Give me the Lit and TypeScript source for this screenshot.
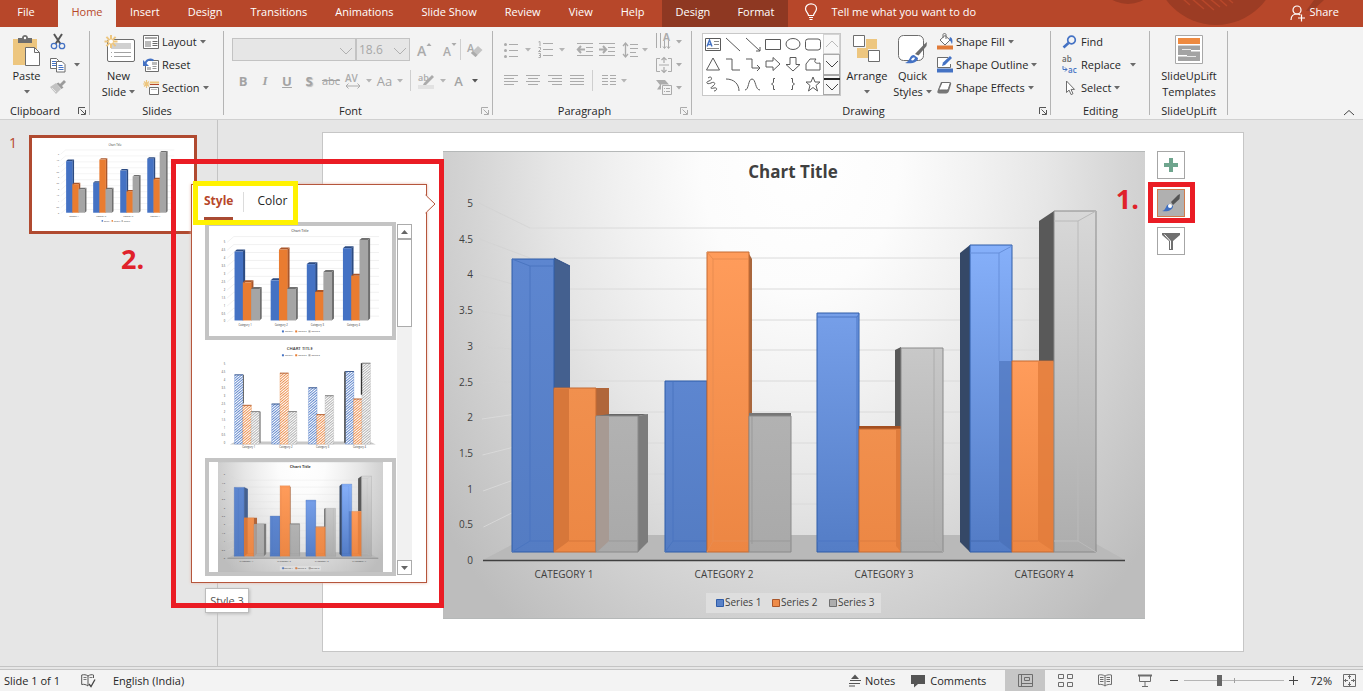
import { LitElement, html, css, svg, nothing } from "lit";
import { customElement, property, state } from "lit/decorators.js";

const base = css`
  :host { box-sizing: border-box; font-family: "Open Sans", "Noto Sans", sans-serif; font-size: 11px; line-height: 16px; color: #262626; }
  *, *::before, *::after { box-sizing: border-box; }
  button { font: inherit; color: inherit; background: none; border: 0; padding: 0; margin: 0; }
  svg { display: block; flex: none; overflow: visible; }
`;

/* ---------- small helpers ---------- */
const caret = html`<svg class="caret" width="6" height="4" viewBox="0 0 6 4"><path d="M0 0h6L3 3.6z" fill="currentColor"/></svg>`;
const icon = (w: number, h: number, body: unknown) =>
  html`<svg width=${w} height=${h} viewBox="0 0 ${w} ${h}" fill="none" stroke-width="1">${body}</svg>`;

const G = "#6d6d6d";
const D = "#ababab";
const B = "#4472c4";
const S = "#edc67f";

const ic = {
  paste: icon(30, 32, svg`<path d="M1 4h24v26H1z" fill="${S}"/><path d="M6 3h4c0-4 6-4 6 0h4v5H6z" fill="${G}"/><circle cx="13" cy="3" r="1.2" fill="#fff"/><path d="M13.500 12.500h9l5 5v13h-14z" fill="#fff" stroke="${G}"/><path d="M22.500 12.500v5h5" stroke="${G}"/>`),
  cut: icon(16, 16, svg`<path d="M4 0l6.500 10M12 0L5.500 10" stroke="#555" stroke-width="2"/><circle cx="4" cy="12" r="2.700" stroke="${B}" stroke-width="1.300"/><circle cx="12" cy="12" r="2.700" stroke="${B}" stroke-width="1.300"/>`),
  copy: icon(16, 16, svg`<path d="M.5 1.500h6l2 2v8h-8z" fill="#fff" stroke="${G}"/><path d="M2 4.500h4M2 6.500h4M2 8.500h4" stroke="${B}"/><path d="M6.500 4.500h5.500l3 3v7.500H6.500z" fill="#fff" stroke="${G}"/><path d="M8.500 8.500h4M8.500 10.500h5M8.500 12.500h5" stroke="${B}"/>`),
  painter: icon(17, 15, svg`<path d="M0 7l6-4 5 6-5 5z" fill="#c2c2c2"/><path d="M6.500 3.500l5 5.500 2-1.500-1.500-1.500 4-4-2-2-4 4L8.500 2.500z" fill="#9b9b9b"/><path d="M2 8l4 4" stroke="#e5e5e5"/>`),
  newSlide: icon(32, 30, svg`<rect x="4.500" y="4.500" width="27" height="22" rx="1.500" fill="#fff" stroke="${G}"/><path d="M8 8h20v6H8z" fill="#d0d0d0"/><path d="M8 17.500h1M11 17.500h17M8 21.500h1M11 21.500h17" stroke="#a2a2a2"/><path d="M8 0v13M1.500 6.500h13M3.400 1.900l9.200 9.200M12.600 1.900l-9.200 9.200" stroke="${S}" stroke-width="2"/><circle cx="8" cy="6.500" r="2" fill="#fff"/>`),
  layout: icon(16, 14, svg`<path d="M.5.5h15v13H.5z" fill="#fff" stroke="${G}"/><path d="M2 2h12v2H2z" fill="#a9a9a9"/><path d="M2 6h6v6H2z" fill="#bbb"/><path d="M9.500 6.500h5M9.500 8.500h5M9.500 10.500h5" stroke="${G}"/>`),
  reset: icon(16, 14, svg`<path d="M4.500 2.500h11v11h-13v-6" fill="#fff" stroke="${G}"/><path d="M9 4h5v3H9zM4 9h4v3H4z" fill="#bbb"/><path d="M9.500 8.500h4M9.500 10.500h4" stroke="#999"/><path d="M2 6.500C3 1.500 7 .5 10.500 2.500" stroke="${B}" stroke-width="2"/><path d="M0 2v6h6z" fill="${B}"/>`),
  section: icon(16, 15, svg`<path d="M7 2.500h9" stroke="${S}" stroke-width="2"/><path d="M7 4.500h9" stroke="#b7472a"/><path d="M6.500 7.500h9v7h-9z" fill="#fff" stroke="${G}"/><path d="M8 9.500h6" stroke="#bbb"/><path d="M3.500 0v8M0 4h7M1 1.500l5 5M6 1.500l-5 5" stroke="${S}" stroke-width="1.200"/>`),
  launcher: icon(8, 8, svg`<path d="M.5 7V.5H7M7.500 3v4.500H3M2.500 2.500l4.500 4.500" stroke="currentColor"/>`),
  grow: icon(15, 16, svg`<text x="0" y="14" font-size="14" font-weight="600" fill="${D}">A</text><path d="M9.500 4l2.500-3 2.500 3z" fill="${D}"/>`),
  shrink: icon(15, 16, svg`<text x="1" y="14" font-size="12" font-weight="600" fill="${D}">A</text><path d="M9.500 1l2.500 3 2.500-3z" fill="${D}"/>`),
  eraser: icon(16, 16, svg`<text x="0" y="10" font-size="11" font-weight="600" fill="${D}">A</text><path d="M4 11l7-7 4.500 4-7 7z" fill="#c4c4c4"/><path d="M4 11l2-2 4.500 4-2 2z" fill="${D}"/>`),
  spacing: icon(16, 16, svg`<text x="0" y="9" font-size="10" font-weight="600" fill="${D}">AV</text><path d="M1 13h14M3.500 10.500L1 13l2.500 2.500M12.500 10.500L15 13l-2.500 2.500" stroke="${D}"/>`),
  highlight: icon(17, 16, svg`<text x="0" y="8" font-size="9" font-weight="600" fill="${D}">ab</text><path d="M6 10L14 2l2 2-8 8-3 0z" fill="${D}"/><path d="M0 12h16v4H0z" fill="#e2e2e2"/>`),
  bullets: icon(16, 16, svg`<path d="M5 2.500h9M5 8.500h9M5 14.500h9" stroke="${D}"/><circle cx="1.500" cy="2.500" r="1.500" fill="${D}"/><circle cx="1.500" cy="8.500" r="1.500" fill="${D}"/><circle cx="1.500" cy="14.500" r="1.500" fill="${D}"/>`),
  numbers: icon(16, 17, svg`<path d="M.5 1L2 .5V5M.5 6.500h2v2l-2 2H3M.5 12.500h2v4h-2M1 14.500h1.500" stroke="${D}"/><path d="M5 2.500h10M5 8.500h10M5 14.500h10" stroke="${D}"/>`),
  outdent: icon(17, 14, svg`<path d="M0 .5h16M9 4.500h7M9 8.500h7M0 12.500h16" stroke="${D}"/><path d="M1 6.500h7M4 3L.8 6.500 4 10" stroke="${D}" stroke-width="2"/>`),
  indent: icon(17, 14, svg`<path d="M0 .5h16M9 4.500h7M9 8.500h7M0 12.500h16" stroke="${D}"/><path d="M0 6.500h6M4 3l3.200 3.500L4 10" stroke="${D}" stroke-width="2"/>`),
  lineSpace: icon(16, 16, svg`<path d="M2.500 1v14M0 4l2.500-3L5 4M0 12l2.500 3L5 12" stroke="${D}" stroke-width="1.300"/><path d="M7 2.500h8M7 6.500h8M7 10.500h6M7 14.500h8" stroke="${D}"/>`),
  left: icon(16, 12, svg`<path d="M0 .5h14M0 3.500h10M0 6.500h14M0 9.500h10" stroke="${D}"/>`),
  center: icon(16, 12, svg`<path d="M0 .5h14M2 3.500h10M0 6.500h14M2 9.500h10" stroke="${D}"/>`),
  right: icon(16, 12, svg`<path d="M0 .5h14M4 3.500h10M0 6.500h14M4 9.500h10" stroke="${D}"/>`),
  justify: icon(16, 12, svg`<path d="M0 .5h14M0 3.500h14M0 6.500h14M0 9.500h14" stroke="${D}"/>`),
  columns: icon(14, 12, svg`<path d="M0 .5h6M0 3.500h6M0 6.500h6M0 9.500h6M8 .5h6M8 3.500h6M8 6.500h6M8 9.500h6" stroke="${D}"/>`),
  textDir: icon(17, 17, svg`<path d="M.5 0v15M4.500 0v15M8.500 8v7M12.500 8v7M7 13.500l1.500 2 1.500-2M11 13.500l1.500 2 1.500-2" stroke="${D}"/><text x="7" y="8" font-size="10" font-weight="700" fill="${D}">A</text>`),
  alignText: icon(17, 16, svg`<path d="M4 1.500H.5v13H4M12 1.500h3.500v13H12M3 8h10" stroke="${D}"/><path d="M8 0v6M8 10v6M5.500 3L8 .5 10.500 3M5.500 13L8 15.500 10.500 13" stroke="${D}" stroke-width="1.200"/>`),
  smartArt: icon(17, 17, svg`<path d="M0 1h9l4 4.500H5v5H1L4 6z" fill="${D}"/><path d="M6.500 6.500h9v9h-9z" fill="#f3f3f3" stroke="${D}"/><path d="M8 9.500h1M10 9.500h4M8 12.500h1M10 12.500h4" stroke="${D}"/>`),
  arrange: icon(28, 28, svg`<path d="M13 4h11v10H13zM4 13h11v10H4z" fill="${S}"/><path d="M.5.5h11v11H.5zM15.500 15.500h11v11h-11z" fill="#fff" stroke="${G}"/>`),
  quick: icon(30, 31, svg`<rect x=".5" y=".5" width="25" height="25" rx="5" fill="#fff" stroke="${G}"/><path d="M17 19l9-9.500 3-2.500-.5 4-8 9.500z" fill="${G}"/><path d="M7 28c5-1 4-8 9-8l4 3c0 4-5 6-13 5z" fill="${B}"/><path d="M13 25c1-2 2-3 4-2-1 2-2 3-4 2z" fill="#fff"/>`),
  fill: icon(16, 17, svg`<path d="M3 7l5-4.500L13 7l-5 5z" fill="#fff" stroke="${G}"/><path d="M6 5V1.500C6 .2 9 .2 9 1.500V6" stroke="${G}"/><path d="M13 4c2.500 1 3 4 2 7-1-1-.5-3-3-4z" fill="${B}"/><path d="M0 12.500h16v4H0z" fill="#e07b39"/>`),
  outline: icon(16, 17, svg`<path d="M11 1.500H.5v10h13V8" fill="#fff" stroke="${G}"/><path d="M5 10l1-3.500L13 0l2 2-7 7z" fill="${B}"/><path d="M0 12.500h16v4H0z" fill="${B}"/>`),
  effects: icon(16, 14, svg`<path d="M4 1h8.500c1.500 0 2 1 1.500 2.500l-2 6.500c-.5 1.500-1.500 2.500-3 2.500H2.500c-2 0-2.500-1-2-2.500z" fill="#777"/><path d="M5 1.500h7c1 0 1.400.7 1 1.500l-1.500 4.500c-.3 1-1 1.500-2 1.500H3.500C2.300 9 2 8.500 2.300 7.500z" fill="#fff" stroke="${G}"/>`),
  find: icon(16, 14, svg`<circle cx="9.500" cy="5" r="3.800" stroke="${B}" stroke-width="1.700"/><path d="M6.500 8L1.500 12.500" stroke="${B}" stroke-width="2.600"/>`),
  replace: icon(16, 17, svg`<text x="0" y="6" font-size="8" font-weight="600" fill="#666">ab</text><text x="6" y="17" font-size="8" font-weight="600" fill="${B}">ac</text><path d="M1 10v3.500h4M3 11.500l2 2-2 2" stroke="${B}"/>`),
  select: icon(16, 16, svg`<path d="M4.500 1v11.500l2.600-2.400 2 4.500 1.900-.9-2-4.300h3.500z" fill="#fff" stroke="${G}"/>`),
  uplift: icon(28, 29, svg`<path d="M.5.5h27v28H.5z" fill="#fff" stroke="#a8a8a8"/><path d="M3 3h22v6H3z" fill="#ee8a40"/><path d="M3 10.500h22V15h-9v1.500h9V26H3v-4.500h9V20H3z" fill="#a3a3a3"/><path d="M7 14.500h9M12 21.500h9" stroke="#e8e8e8"/>`),
  bulb: icon(14, 18, svg`<path d="M4.500 12.500C4.500 10 1.500 9 1.500 5.800 1.500 2.800 4 .8 7 .8s5.500 2 5.500 5c0 3.200-3 4.200-3 6.700zM5 14.500h4M5.500 16.500h3" stroke="#fff" stroke-width="1.200"/>`),
  person: icon(16, 17, svg`<circle cx="7" cy="5" r="4" stroke="#fff" stroke-width="1.200"/><path d="M1 15c0-4 2.500-6 6-6 1.500 0 2.500.4 3.300 1M11.500 9.500v7M8 13h7" stroke="#fff" stroke-width="1.200"/>`),
  chevron: icon(12, 7, svg`<path d="M1 6l5-4.500L11 6" stroke="#444"/>`),
  spell: icon(15, 15, svg`<path d="M7 3C5 1.500 3 1.500 .7 2v9.500c2.300-.5 4.300 0 6.300 1.500M7 3c2-1.500 4-1.500 5.500-1v3M7 3v10" stroke="#555"/><path d="M2.500 4.500h3M2.500 6.500h3M8.500 4.500h3" stroke="#777"/><path d="M8 11l2 2.500 4-7" stroke="#444" stroke-width="1.300"/>`),
  notes: icon(12, 13, svg`<path d="M2 5l4-4.500L10 5z" fill="#555"/><path d="M1 6.500h11M0 9.500h11M0 12h6" stroke="#555"/>`),
  comment: icon(15, 14, svg`<path d="M0 1h14v9H7l-4 3.500V10H0z" fill="#555"/>`),
  normal: icon(15, 13, svg`<path d="M.5.5h14v12H.5zM3.500 .5v12M6.500 3.500h5v3h-5zM3.500 9.500h11" stroke="${G}"/>`),
  sorter: icon(15, 13, svg`<path d="M.5.5h5v4h-5zM9.500.5h5v4h-5zM.5 8.500h5v4h-5zM9.500 8.500h5v4h-5z" stroke="${G}"/>`),
  reading: icon(14, 13, svg`<path d="M7 2C5 .8 3 .5.5 1v9.500c2.500-.4 4.500 0 6.500 1.500 2-1.500 4-1.900 6.500-1.500V1C11 .5 9 .8 7 2zv10" stroke="${G}"/><path d="M2 3.500h3.500M2 5.500h3.500M2 7.500h3.500M8.500 3.500H12M8.500 5.500H12M8.500 7.500H12" stroke="${G}"/>`),
  show: icon(14, 13, svg`<path d="M0 1.500h14" stroke="${G}" stroke-width="2"/><path d="M1.500 2v5.500h11V2M7 7.500V12M4 12.500h6" stroke="${G}"/>`),
  fit: icon(14, 14, svg`<path d="M.5.5h12v12H.5z" stroke="${G}"/><path d="M6.500 1v4M6.500 8v4M1 6.500h4M8 6.500h4M5 3l1.500-1.500L8 3M5 10l1.500 1.500L8 10M3 5L1.500 6.500 3 8M10 5l1.500 1.500L10 8" stroke="${G}"/>`),
};

/* ---------- data ---------- */
const AXIS = ["5", "4.5", "4", "3.5", "3", "2.5", "2", "1.5", "1", "0.5", "0"];
const SERIES = ["Series 1", "Series 2", "Series 3"];
const FILLS = ["#4472c4", "#e97c30", "#a5a5a5"];
const SIDES = ["#2c4b82", "#a9562a", "#6f6f6f"];
const CATS = [1, 2, 3, 4];

/* Plain 3-D clustered columns, or their hatched variant. */
@customElement("mini-chart")
export class MiniChart extends LitElement {
  @property() variant = "plain";
  static styles = [base, css`
    :host { display: block; width: 100%; }
    svg { width: 100%; height: auto; overflow: hidden; }
  `];
  render() {
    const hatch = this.variant === "hatch";
    const xs = hatch ? [194, 306, 417, 528] : [194, 303, 412, 521];
    const floor = hatch ? 514 : 498;
    const tops = hatch
      ? [[306, 394, 345, 296], [398, 301, 426, 379], [417, 417, 369, 271]]
      : [[290, 377, 328, 280], [383, 284, 412, 363], [403, 403, 352, 255]];
    return html`<svg viewBox="117 213 552 330" role="img" aria-label="Clustered column preview">
      <defs>${FILLS.map((c, i) => svg`<pattern id="h${i}" width="6" height="6" patternUnits="userSpaceOnUse" patternTransform="rotate(50)"><path d="M0 0h6v6H0z" fill="#fff"/><path d="M0 0h2.500v6H0z" fill="${c}"/></pattern>`)}</defs>
      ${hatch ? svg`<path d="M180 516L197 507H602L620 516z" fill="#c8c8c8"/>` : AXIS.map((_, i) => svg`<path d="M172 ${262 + i * 24}L192 ${245 + i * 24}H630" fill="none" stroke="#e9e9e9" stroke-width="2"/>`)}
      <g font-size="8" fill="#444" text-anchor="end">${AXIS.map((t, i) => svg`<text x="166" y="${hatch ? 276 + i * 24 : 264 + i * 24}">${t}</text>`)}</g>
      ${xs.map((x, c) => [0, 1, 2].map((s) => {
        const l = x + s * 25, t = tops[s][c];
        if (hatch) return svg`<path d="M${l} ${t}h26V${floor + 1}h-26z" fill="url(#h${s})" stroke="${FILLS[s]}" stroke-width=".8"/><path d="M${l} ${t}h26" stroke="${SIDES[s]}" stroke-width="2.500"/>${(c === 3 && s !== 1) ? svg`<path d="M${l - 1} ${t}V${s ? 366 : 511}" stroke="#333" stroke-width="4"/>` : nothing}${(c === 0 && s !== 1) ? svg`<path d="M${l + 27} ${t}V${s ? 511 : 392}" stroke="#666" stroke-width="3"/>` : nothing}`;
        return svg`<path d="M${l + 25} ${t}l7 -6V${floor - 6}l-7 6z" fill="${SIDES[s]}"/><path d="M${l} ${t}l7 -6h25l-7 6z" fill="${SIDES[s]}"/><path d="M${l} ${t}h26V${floor}h-26z" fill="${FILLS[s]}"/>`;
      }))}
      <g font-size="8" fill="#333" text-anchor="middle">${CATS.map((n, i) => svg`<text x="${xs[i] + (hatch ? 43 : 32)}" y="${hatch ? 528 : 516}">Category ${n}</text>`)}
        ${SERIES.map((t, i) => svg`<path d="M${337 + i * 40} ${hatch ? 244 : 528}h6v6h-6z" fill="${FILLS[i]}"/><text x="${359 + i * 40}" y="${hatch ? 250 : 534}" font-size="7">${t}</text>`)}
        <text x="391" y="${hatch ? 231 : 231}" font-size="${hatch ? 13 : 11}" font-weight="${hatch ? 600 : 400}">${hatch ? "CHART TITLE" : "Chart Title"}</text></g>
    </svg>`;
  }
}

/* Perspective glass-column chart on a grey radial backdrop. */
@customElement("glass-chart")
export class GlassChart extends LitElement {
  static styles = [base, css`
    :host { display: block; width: 100%; }
    svg { width: 100%; height: auto; overflow: hidden; }
    .ink { fill: #404040; }
  `];
  render() {
    const back = [228, 258, 289, 320, 350, 381, 412, 443, 474, 504];
    const bar = (x: number, top: number, s: number, glow: string, w = 42) => svg`
      <path d="M${x} ${top}h${w}V552h-${w}z" fill="url(#${glow})" stroke="${["#2f5ca8", "#c56a33", "#8a8a8a"][s]}"/>`;
    const legend = [[716, "#5a82c8", "#2f5ca8"], [772, "#ee8b48", "#a9562a"], [829, "#adadad", "#6f6f6f"]];
    return html`<svg viewBox="443 151 702 468" role="img" aria-label="Chart Title">
      <defs>
        <radialGradient id="bg" gradientUnits="userSpaceOnUse" cx="0" cy="0" r="1" gradientTransform="translate(800 160) scale(450 600)">
          <stop offset="0" stop-color="#fff"/><stop offset=".22" stop-color="#fcfcfc"/><stop offset=".4" stop-color="#f1f1f1"/><stop offset=".55" stop-color="#e6e6e6"/><stop offset=".72" stop-color="#d5d5d5"/><stop offset="1" stop-color="#bdbdbd"/>
        </radialGradient>
        ${[["b1", "#5d86d0", "#547cc3"], ["b3", "#769fe9", "#547dc6"], ["b4", "#86b0fa", "#527bc5"], ["o1", "#f1904e", "#ec8744"], ["o2", "#ff9c5b", "#ec8643"], ["g1", "#b2b2b2", "#a9a9a9"], ["g3", "#c8c8c8", "#adadad"], ["g4", "#d8d8d8", "#adadad"]].map(([id, a, b]) => svg`<linearGradient id="${id}" x2="0" y2="1"><stop stop-color="${a}"/><stop offset="1" stop-color="${b}"/></linearGradient>`)}
      </defs>
      <path d="M443 151h702v468H443z" fill="url(#bg)"/><path d="M443 151.500h702M443 618.500h702" stroke="#b5b8b8"/>
      <path d="M483 560L530 535H1080L1125 560z" fill="#b9b9b9"/>
      ${back.map((y, i) => svg`<path d="M530 ${y}H1080" fill="none" stroke="#dadada"/><path d="M${479 + i / 2} ${203 + i * 36}L530 ${y}" stroke="${i < 6 ? "#d2d2d2" : "#dedede"}" stroke-opacity=".7"/>`)}

      <path d="M554 258L570 266V541L554 552z" fill="#44608f"/><path d="M554 258L570 266" stroke="#2f4f88"/>
      ${bar(512, 259, 0, "b1")}<path d="M512 259L530 266H554M530 266V541L512 552M530 541H554" fill="none" stroke="#4a75c0"/>
      <path d="M596 388H609V541L596 552z" fill="#b0663a"/>
      ${bar(554, 388, 1, "o1")}<path d="M554 389H569V541L554 552z" fill="#d7773a"/><path d="M569 541H596" stroke="#d7773a"/>
      <path d="M638 416L648 414V542L638 552z" fill="#7c7c7c"/><path d="M596 416L610 414H648L638 416z" fill="#666"/>
      ${bar(596, 416, 2, "g1")}<path d="M597 416H609V541L597 552z" fill="#a79a93"/><path d="M609 541H638" stroke="#999"/>

      ${bar(665, 381, 0, "b1")}<path d="M673 382V541L665 552M673 541H706" fill="none" stroke="#4a75c0"/>
      <path d="M748 252L752 259V544L748 552z" fill="#a9673d"/>
      ${bar(707, 252, 1, "o2")}<path d="M707 252L713 259H748M713 259V541L707 552M713 541H748" fill="none" stroke="#e98c50"/>
      <path d="M749 416V413H791V541L789 552z" fill="#777"/>
      ${bar(749, 416, 2, "g1")}<path d="M752 416V544" stroke="#999"/><path d="M749 541H791" stroke="#999"/>

      ${bar(817, 313, 0, "b3")}<path d="M817 317H857L859 314M857 317V541L859 552M817 541H857" fill="none" stroke="#4d77c4"/>
      <path d="M895 350L901 347V426H895z" fill="#595959"/>
      <path d="M859 429V426H901V429z" fill="#a44f20"/>
      ${bar(859, 429, 1, "o1")}<path d="M896 429V546L901 552V429z" fill="#df7c3c"/><path d="M859 541H896" stroke="#dd7d40"/>
      ${bar(901, 348, 2, "g3")}<path d="M934 349V541L943 552M901 541H934" fill="none" stroke="#acacac"/>

      <path d="M960 253L970 245V552L960 542z" fill="#354867"/>
      ${bar(970, 245, 0, "b4")}<path d="M970 253H999L1012 246M999 253V361" fill="none" stroke="#668fda"/><path d="M999 361H1012V551L999 541z" fill="#456cb2" opacity=".55"/><path d="M970 541H999" stroke="#456cb2"/>
      <path d="M1039 221L1054 211V361H1039z" fill="#595959"/>
      ${bar(1012, 361, 1, "o2")}<path d="M1038 362H1053V551L1038 541z" fill="#e17c3b" opacity=".8"/><path d="M1012 541H1038" stroke="#dd7d40"/>
      ${bar(1054, 211, 2, "g4")}<path d="M1054 221H1078L1096 211M1078 221V541L1096 552M1054 541H1078" fill="none" stroke="#bababa"/>

      <path d="M483 560.500H1125" stroke="#404040" stroke-width="1.500"/>
      <g class="ink" font-size="10" text-anchor="end">${AXIS.map((t, i) => svg`<text x="473" y="${Math.round(207 + i * 35.7)}">${t}</text>`)}</g>
      <g class="ink" font-size="10" text-anchor="middle">${CATS.map((n, i) => svg`<text x="${564 + i * 160}" y="578">CATEGORY ${n}</text>`)}</g>
      <text class="ink" x="793" y="178" font-size="17" font-weight="700" text-anchor="middle">Chart Title</text>
      <path d="M706 593h175v20H706z" fill="#dedede"/>
      <g class="ink" font-size="10">${legend.map(([x, f, s], i) => svg`<path d="M${Number(x) + 0.5} 599.500h7v7h-7z" fill="${f}" stroke="${s}"/><text x="${Number(x) + 9}" y="606">${SERIES[i]}</text>`)}</g>
    </svg>`;
  }
}

/* ---------- ribbon ---------- */
@customElement("office-ribbon")
export class OfficeRibbon extends LitElement {
  static styles = [base, css`
    :host { display: block; flex: none; }
    .tabs { position: relative; display: flex; height: 27px; background: #b7472a; color: #fff; overflow: hidden; }
    .deco { position: absolute; right: 0; top: 0; overflow: hidden; }
    .tab { height: 27px; padding: 0 14px 3px; position: relative; white-space: nowrap; }
    .tab.edge { width: 58px; padding: 0 6px 3px; }
    .tab.file { padding-right: 12px; }
    .tab.on { background: #f3f3f3; color: #b7472a; }
    .context { display: flex; background: #8e3822; margin-left: 4px; }
    .context .tab { padding: 0 14px 3px 13px; }
    .tell { position: relative; display: flex; align-items: center; gap: 13px; padding: 0 0 3px 16px; }
    .share { position: relative; display: flex; align-items: center; gap: 3px; margin-left: auto; padding: 0 24px 3px 0; }
    .share svg { margin-top: 2px; }
    .ribbon { display: flex; height: 93px; background: #f3f3f3; border-bottom: 1px solid #d0d0d0; padding: 3px 0 0; }
    .group { display: flex; flex-direction: column; position: relative; height: 89px; flex: none; }
    .group::after { content: ""; position: absolute; right: 0; top: 1px; bottom: 4px; width: 1px; background: #b4b4b4; }
    .body { display: flex; flex: 1; align-items: flex-start; }
    .label { display: flex; justify-content: center; align-items: center; height: 16px; position: relative; }
    .label button { position: absolute; right: 4px; top: 4px; color: #555; }
    .dim, .label .dim { color: #ababab; }
    .clip { width: 90px; } .slides { width: 134px; } .font { width: 269px; } .para { width: 199px; }
    .draw { width: 359px; } .edit { width: 99px; } .lift { width: 78px; }
    .clip .label { padding-right: 20px; }
    .font .label, .para .label, .draw .label { padding-right: 16px; }
    .lift .body { justify-content: center; }
    .edit .col { padding-left: 11px; }
    .big { display: flex; flex-direction: column; align-items: center; padding-top: 5px; text-align: center; white-space: nowrap; }
    .clip .big { width: 50px; padding-left: 3px; }
    .slides .big { width: 53px; padding-left: 4px; }
    .big.arrange { width: 42px; }
    .big.quick { width: 49px; }
    .pic { display: flex; align-items: flex-start; height: 33px; }
    .line { display: flex; align-items: center; justify-content: center; gap: 3px; height: 16px; }
    .col { display: flex; flex-direction: column; }
    .row { display: flex; align-items: center; height: 23px; gap: 3px; white-space: nowrap; }
    .row.wide { gap: 8px; }
    .gap { width: 3px; }
    .caret { color: #6a6a6a; }
    .dim .caret { color: #ababab; }
    .line2 { display: flex; align-items: center; height: 31px; }
    .tool { display: flex; align-items: center; justify-content: center; height: 22px; color: #a3a3a3; font-size: 13px; flex: none; }
    .tool .caret { color: #b5b5b5; }
    .tool.ink { gap: 9px; font-weight: 600; }
    .tool.ink .caret { color: #555; }
    .w22 { width: 22px; } .w28 { width: 28px; } .w32 { width: 32px; } .w40 { width: 40px; }
    .start { justify-content: flex-start; }
    .pair { gap: 5px; }
    .numbering { margin: 0 9px 0 7px; }
    .spacing { gap: 3px; padding-left: 5px; }
    .sep { width: 1px; height: 21px; background: #cfcfcf; flex: none; }
    .sep.mid { margin: 0 7px 0 4px; }
    .sep.tail { margin-right: 9px; }
    .fonts { padding: 4px 0 0 8px; }
    .paras { padding: 4px 0 0 11px; width: 158px; flex: none; }
    .directions { padding-left: 5px; }
    .b { font-weight: 700; } .i { font-style: italic; font-family: "Liberation Serif", serif; font-weight: 700; } .u { text-decoration: underline; font-weight: 700; }
    .s { font-weight: 700; text-shadow: 1px 1px 1px #bbb; } .abc { text-decoration: line-through; font-size: 11px; }
    select { appearance: none; height: 23px; border: 1px solid #c3c3c3; border-radius: 0; background: #e6e6e6; color: #a8a8a8; font: inherit; font-size: 12px; padding: 0 2px; opacity: 1; margin: 0; width: 100%; }
    .pick { position: relative; flex: none; }
    .pick svg { position: absolute; right: 3px; top: 9px; }
    .face { width: 124px; } .size { width: 54px; }
    .gallery { display: flex; border: 1px solid #c8c8c8; background: #fff; height: 63px; margin: 3px 5px 0 10px; }
    .shapes { display: grid; grid-template-columns: repeat(6, 20px); grid-auto-rows: 20px; place-items: center; }
    .steps { display: flex; flex-direction: column; width: 17px; }
    .steps button { flex: 1; display: grid; place-items: center; border: 1px solid #a8a8a8; background: #f8f8f8; }
    .steps button:first-child { border-color: #d4d4d4; }
    .collapse { margin: auto 8px 0 auto; padding-bottom: 3px; }
  `];
  render() {
    const chev = (c = "#444", w = 14) => icon(w, 8, svg`<path d="M1 1l6 6 6-6" stroke="${c}"/>`);
    const shape = (d: string, x: unknown = nothing) => html`<svg width="18" height="18" viewBox="0 0 18 18" fill="none" stroke="#5a5a5a">${x}<path d=${d}/></svg>`;
    const launcher = (n: string, dim = false) => html`<button class=${dim ? "dim" : ""} aria-label="${n} settings">${ic.launcher}</button>`;
    return html`
      <nav class="tabs">
        <svg class="deco" width="400" height="27" viewBox="963 0 400 27">
          <g fill="#9c3c24"><circle cx="1216" cy="-37" r="62"/><circle cx="1128" cy="-28" r="32"/><path d="M1306 11l8-11h10l-12 11z"/></g>
          <g stroke="#b7472a" stroke-width="1.500"><path d="M1182-2l8 7M1191-2l13 11M1200-2l14 12M1209-2l11 9M1218-2l9 8M1227-2l6 5"/></g>
        </svg>
        <button class="tab edge file">File</button><button class="tab edge on">Home</button>
        ${["Insert", "Design", "Transitions", "Animations", "Slide Show", "Review", "View", "Help"].map((t) => html`<button class="tab">${t}</button>`)}
        <div class="context"><button class="tab">Design</button><button class="tab">Format</button></div>
        <button class="tell">${ic.bulb}<span>Tell me what you want to do</span></button>
        <button class="share">${ic.person}<span>Share</span></button>
      </nav>
      <div class="ribbon">
        <section class="group clip">
          <div class="body">
            <button class="big"><span class="pic">${ic.paste}</span><span class="line">Paste</span><span class="line">${caret}</span></button>
            <div class="col"><button class="row" aria-label="Cut">${ic.cut}</button><button class="row wide" aria-label="Copy">${ic.copy}${caret}</button><button class="row" aria-label="Format painter">${ic.painter}</button></div>
          </div>
          <div class="label">Clipboard${launcher("Clipboard")}</div>
        </section>
        <section class="group slides">
          <div class="body">
            <button class="big"><span class="pic">${ic.newSlide}</span><span class="line">New</span><span class="line">Slide${caret}</span></button>
            <div class="col"><button class="row">${ic.layout}Layout${caret}</button><button class="row">${ic.reset}Reset</button><button class="row">${ic.section}Section${caret}</button></div>
          </div>
          <div class="label">Slides</div>
        </section>
        <section class="group font">
          <div class="body col fonts">
            <div class="line2">
              <div class="pick face"><select aria-label="Font"><option></option></select>${chev("#b0b0b0")}</div>
              <div class="pick size"><select aria-label="Font size"><option>18.6</option></select>${chev("#b0b0b0")}</div>
              <button class="tool w28" aria-label="Increase font size">${ic.grow}</button><button class="tool w22" aria-label="Decrease font size">${ic.shrink}</button>
              <span class="sep"></span><button class="tool w28" aria-label="Clear formatting">${ic.eraser}</button>
            </div>
            <div class="line2">
              <button class="tool w22 b">B</button><button class="tool w22 i">I</button><button class="tool w22 u">U</button><button class="tool w22 s">S</button><button class="tool w22 abc">abc</button>
              <button class="tool pair w32" aria-label="Character spacing">${ic.spacing}${caret}</button>
              <button class="tool pair w32">Aa${caret}</button><span class="sep mid"></span>
              <button class="tool pair w28" aria-label="Highlight">${ic.highlight}${caret}</button>
              <button class="tool ink w40">A${caret}</button>
            </div>
          </div>
          <div class="label">Font${launcher("Font", true)}</div>
        </section>
        <section class="group para">
          <div class="body">
            <div class="col paras">
              <div class="line2">
                <button class="tool pair" aria-label="Bullets">${ic.bullets}${caret}</button><button class="tool pair numbering" aria-label="Numbering">${ic.numbers}${caret}</button>
                <button class="tool w22" aria-label="Decrease indent">${ic.outdent}</button><button class="tool w22" aria-label="Increase indent">${ic.indent}</button>
                <button class="tool spacing" aria-label="Line spacing">${ic.lineSpace}${caret}</button>
              </div>
              <div class="line2">
                ${[["Left", ic.left], ["Center", ic.center], ["Right", ic.right], ["Justify", ic.justify]].map(([n, s]) => html`<button class="tool w22 start" aria-label=${n as string}>${s}</button>`)}
                <span class="sep tail"></span><button class="tool pair" aria-label="Columns">${ic.columns}${caret}</button>
              </div>
            </div>
            <div class="col dim directions"><button class="row" aria-label="Text direction">${ic.textDir}${caret}</button><button class="row" aria-label="Align text">${ic.alignText}${caret}</button><button class="row" aria-label="SmartArt">${ic.smartArt}${caret}</button></div>
          </div>
          <div class="label">Paragraph${launcher("Paragraph", true)}</div>
        </section>
        <section class="group draw">
          <div class="body">
            <div class="gallery">
              <div class="shapes">
                ${shape("M1.500 3.500h15v12h-15z", svg`<path d="M3 11.500L5.500 5 8 11.500M4 9.500h3" stroke="#4472c4" stroke-width="1.400"/><path d="M10 6.500h5M10 9.500h5M3 13.500h12" stroke="#8a8a8a"/>`)}
                ${shape("M2 3l14 13")}${shape("M2 3l14 13M16 12v4h-4")}${shape("M1.500 4.500h15v10h-15z")}
                ${shape("", svg`<ellipse cx="9" cy="9" rx="7" ry="5.500"/>`)}${shape("", svg`<rect x="1.500" y="4" width="15" height="11" rx="2.500"/>`)}
                ${shape("M9 3l6.500 12H2.500z")}${shape("M2 4h6v11h8")}${shape("M2 4h6v9h8M13 10l3 3-3 3")}${shape("M2 6h7V2.500l7 6.500-7 6.500V12H2z")}
                ${shape("M6 2.500h6v7h4L9 16 2 9.500h4z")}${shape("M2 15V9l4-5h6c-3 3 0 5 4 4v7z")}
                ${shape("M4 3c4-3 5 2 1 3s-2 4 2 2 5 1 2 3-3 3 1 2 3 3 0 3")}${shape("M2 4c8 0 13 5 13 12")}${shape("M1 15C5 15 4 4 8 4s3 11 8 11")}
                ${shape("M11 3.500H9.500v4L7.500 9l2 1.500v4H11")}${shape("M7 3.500h1.500v4l2 1.500-2 1.500v4H7")}${shape("M9 2l2 5h5l-4 3.500 1.500 5.500L9 12.500 4.500 16 6 10.500 2 7h5z")}
              </div>
              <div class="steps"><button aria-label="Scroll up">${icon(14, 8, svg`<path d="M1 7l6-6 6 6" stroke="#bbb"/>`)}</button><button aria-label="Scroll down">${chev()}</button><button aria-label="More shapes">${icon(16, 14, svg`<path d="M0 1h16" stroke="#222" stroke-width="2"/><path d="M2 6l6 6 6-6" stroke="#444"/>`)}</button></div>
            </div>
            <button class="big arrange"><span class="pic">${ic.arrange}</span><span class="line">Arrange</span><span class="line">${caret}</span></button>
            <button class="big quick"><span class="pic">${ic.quick}</span><span class="line">Quick</span><span class="line">Styles${caret}</span></button>
            <div class="col"><button class="row">${ic.fill}Shape Fill${caret}</button><button class="row">${ic.outline}Shape Outline${caret}</button><button class="row">${ic.effects}Shape Effects${caret}</button></div>
          </div>
          <div class="label">Drawing${launcher("Drawing")}</div>
        </section>
        <section class="group edit">
          <div class="body">
            <div class="col"><button class="row">${ic.find}Find</button><button class="row">${ic.replace}Replace<span class="gap"></span>${caret}</button><button class="row">${ic.select}Select${caret}</button></div>
          </div>
          <div class="label">Editing</div>
        </section>
        <section class="group lift">
          <div class="body">
            <button class="big"><span class="pic">${ic.uplift}</span><span class="line">SlideUpLift</span><span class="line">Templates</span></button>
          </div>
          <div class="label">SlideUpLift</div>
        </section>
        <button class="collapse" aria-label="Collapse the ribbon">${ic.chevron}</button>
      </div>`;
  }
}

/* ---------- chart style flyout ---------- */
@customElement("style-flyout")
export class StyleFlyout extends LitElement {
  @state() tab = "Style";
  static styles = [base, css`
    :host { display: block; width: 236px; height: 399px; background: #fff; border: 1px solid #b5563c; box-shadow: 0 0 3px #e8b9aa; }
    .nub { position: absolute; right: -10px; top: 10px; }
    .tabs { display: flex; height: 37px; padding-left: 12px; font-size: 12px; }
    .tabs button { height: 35px; border-bottom: 3px solid transparent; }
    .tabs .on { color: #b7472a; font-weight: 700; border-color: #a94a32; }
    .rule { width: 1px; height: 20px; background: #dcdcdc; margin: 7px 13px 0 10px; }
    .main { display: flex; padding-left: 13px; }
    .list { display: grid; grid-auto-rows: 118px; width: 192px; }
    .item { display: block; width: 191px; height: 118px; border: 4px solid transparent; overflow: hidden; background: #fff; }
    .item.hot { border-color: #c4c4c4; }
    .item glass-chart { width: 165px; margin: 0 auto; }
    .bar { display: flex; flex-direction: column; width: 15px; margin-top: 2px; background: #f1f1f1; height: 351px; }
    .bar button { width: 15px; height: 15px; background: #fff; border: 1px solid #ababab; display: grid; place-items: center; flex: none; }
    .grip { height: 88px; background: #fff; border: 1px solid #ababab; margin-bottom: auto; }
  `];
  render() {
    return html`
      <svg class="nub" width="11" height="18" viewBox="0 0 11 18"><path d="M.5 0L10 9 .5 18" fill="#fff" stroke="#b5563c"/><path d="M.5 1v16" stroke="#fff" stroke-width="2"/></svg>
      <div class="tabs">${["Style", "Color"].map((t, i) => html`${i ? html`<span class="rule"></span>` : nothing}<button class=${t === this.tab ? "on" : ""} @click=${() => (this.tab = t)}>${t}</button>`)}</div>
      <div class="main">
        <div class="list">
          <button class="item hot" aria-label="Style 1"><mini-chart></mini-chart></button>
          <button class="item" aria-label="Style 2"><mini-chart variant="hatch"></mini-chart></button>
          <button class="item hot" aria-label="Style 3"><glass-chart></glass-chart></button>
        </div>
        <div class="bar">
          <button aria-label="Up"><svg width="7" height="4" viewBox="0 0 7 4"><path d="M0 4h7L3.500 0z" fill="#666"/></svg></button>
          <div class="grip"></div>
          <button aria-label="Down"><svg width="7" height="4" viewBox="0 0 7 4"><path d="M0 0h7L3.500 4z" fill="#666"/></svg></button>
        </div>
      </div>`;
  }
}

/* ---------- application ---------- */
@customElement("app-root")
export class AppRoot extends LitElement {
  static styles = [base, css`
    :host { display: flex; flex-direction: column; height: 100vh; background: #e6e6e6; overflow: hidden; }
    .stage { position: relative; flex: 1; display: flex; min-height: 0; border-bottom: 1px solid #c4c4c4; margin-bottom: 2px; }
    .pane { width: 218px; flex: none; border-right: 1px solid #c4c4c4; padding: 15px 0 0 9px; display: flex; align-items: flex-start; gap: 12px; }
    .num { color: #b7472a; font-size: 14px; }
    .thumb { width: 168px; height: 99px; border: 3px solid #b04a30; background: #fff; padding: 4px 10px 0 15px; }
    .canvas { flex: 1; display: flex; padding: 12px 119px 14px 104px; min-width: 0; }
    .slide { position: relative; flex: 1; background: #fff; border: 1px solid #c6c6c6; }
    .chart { position: absolute; left: 120px; top: 18px; width: calc(100% - 218px); }
    .side { position: absolute; left: calc(100% + 12px); top: 0; display: grid; gap: 10px; }
    .side button { width: 28px; height: 28px; border: 1px solid #a6a6a6; background: #fff; display: grid; place-items: center; }
    .side .on { background: #b0b0b0; border-color: #d07a4c; }
    .flyout { position: absolute; left: 191px; top: 64px; }
    .tip { position: absolute; left: 205px; top: 468px; width: 44px; height: 25px; background: #fff; border: 1px solid #bcbcbc; box-shadow: 1px 1px 3px #bbb; font-size: 11px; line-height: 24px; text-align: center; color: #555; }
    .mark { position: absolute; border: 5px solid #ea1c24; pointer-events: none; }
    .mark.a { left: 171px; top: 39px; width: 273px; height: 449px; }
    .mark.b { left: 193px; top: 61px; width: 105px; height: 44px; border-color: #fff200; }
    .mark.c { left: calc(100% + 3px); top: 31px; width: 47px; height: 41px; }
    .step { position: absolute; color: #e0222b; font-size: 27px; line-height: 32px; font-weight: 700; }
    .step.one { right: 6px; top: 32px; }
    .step.two { left: 121px; top: 123px; }
    .status { display: flex; align-items: center; height: 22px; flex: none; background: #f3f3f3; border-top: 1px solid #c4c4c4; padding: 0 6px 0 4px; }
    .status button { display: flex; align-items: center; gap: 4px; white-space: nowrap; }
    .status .proof { padding: 0 17px 0 21px; }
    .status .notes { padding-right: 16px; }
    .status .comments { padding-right: 19px; }
    .percent { padding: 0 11px 0 12px; }
    .grow { flex: 1; }
    .status .view { width: 40px; height: 21px; justify-content: center; }
    .view.on { background: #c6c6c6; }
    .zoom { display: flex; align-items: center; gap: 5px; padding-left: 5px; }
    .zoom input { appearance: none; width: 100px; height: 14px; margin: 0; background: linear-gradient(#a0a0a0, #a0a0a0) 50px 50%/1px 5px no-repeat, linear-gradient(#b5b5b5, #b5b5b5) 0 50%/100% 1px no-repeat; }
    .zoom input::-webkit-slider-thumb { appearance: none; width: 5px; height: 11px; background: #666; border-radius: 0; }
  `];
  render() {
    return html`
      <office-ribbon></office-ribbon>
      <main class="stage">
        <aside class="pane"><span class="num">1</span><div class="thumb"><mini-chart></mini-chart></div></aside>
        <div class="canvas">
          <div class="slide">
            <div class="chart">
              <glass-chart></glass-chart>
              <div class="side">
                <button aria-label="Chart elements">${icon(14, 14, svg`<path d="M5 0h4v5h5v4H9v5H5V9H0V5h5z" fill="#6fa58e"/>`)}</button>
                <button class="on" aria-label="Chart styles">${icon(20, 20, svg`<path d="M10 9l7-7 2-1-.5 5-6.500 6z" fill="#555"/><path d="M1 18c5-1 3-7 8-7l3 2c0 4-5 6-11 5z" fill="#3f6fc0"/><circle cx="9" cy="13" r="2" fill="#fff"/>`)}</button>
                <button aria-label="Chart filters">${icon(18, 17, svg`<path d="M0 0h18v2l-7 6v9H7V8L0 2z" fill="#707070"/><path d="M2.500 1.500L8.500 8v8" stroke="#fff"/>`)}</button>
              </div>
              <span class="step one">1.</span>
              <div class="mark c"></div>
            </div>
          </div>
        </div>
        <style-flyout class="flyout"></style-flyout>
        <div class="tip" role="tooltip">Style 3</div>
        <span class="step two">2.</span>
        <div class="mark a"></div>
        <div class="mark b"></div>
      </main>
      <footer class="status">
        <span>Slide 1 of 1</span><button class="proof" aria-label="Spelling">${ic.spell}</button><span>English (India)</span>
        <span class="grow"></span>
        <button class="notes">${ic.notes}Notes</button><button class="comments">${ic.comment}Comments</button>
        <button class="view on" aria-label="Normal">${ic.normal}</button><button class="view" aria-label="Slide sorter">${ic.sorter}</button><button class="view" aria-label="Reading view">${ic.reading}</button><button class="view" aria-label="Slide show">${ic.show}</button>
        <div class="zoom"><button aria-label="Zoom out">${icon(9, 9, svg`<path d="M0 4.500h8" stroke="#444"/>`)}</button><input type="range" min="10" max="190" value="72" aria-label="Zoom"><button aria-label="Zoom in">${icon(9, 9, svg`<path d="M0 4.500h9M4.500 0v9" stroke="#444"/>`)}</button></div>
        <span class="percent">72%</span><button aria-label="Fit slide">${ic.fit}</button>
      </footer>`;
  }
}
